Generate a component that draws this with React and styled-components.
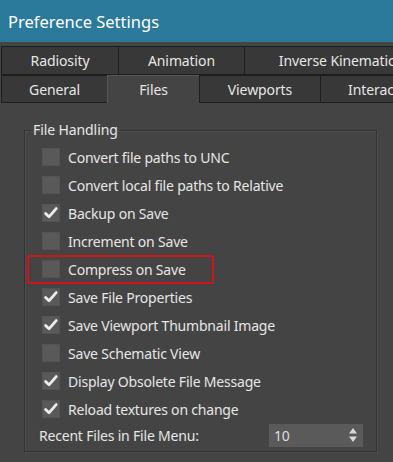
import styled, { createGlobalStyle } from "styled-components";

const GlobalStyle = createGlobalStyle`
  html, body {
    margin: 0;
    padding: 0;
    background: #444444;
    overflow: hidden;
  }
  body {
    font-family: "Noto Sans", "Open Sans", sans-serif;
    color: #e4e4e4;
  }
`;

const tabRows = [
  [
    { label: "Radiosity", width: 118 },
    { label: "Animation", width: 127 },
    { label: "Inverse Kinematics", width: 192 },
  ],
  [
    { label: "General", width: 107 },
    { label: "Files", width: 93, active: true },
    { label: "Viewports", width: 122 },
    { label: "Interaction Mode", width: 168 },
  ],
];

const options = [
  { label: "Convert file paths to UNC", checked: false },
  { label: "Convert local file paths to Relative", checked: false },
  { label: "Backup on Save", checked: true },
  { label: "Increment on Save", checked: false },
  { label: "Compress on Save", checked: false, highlight: true },
  { label: "Save File Properties", checked: true },
  { label: "Save Viewport Thumbnail Image", checked: true },
  { label: "Save Schematic View", checked: false },
  { label: "Display Obsolete File Message", checked: true },
  { label: "Reload textures on change", checked: true },
];

export default function App() {
  return (
    <Window>
      <GlobalStyle />
      <TitleBar>Preference Settings</TitleBar>
      <Tabs>
        {tabRows.map((row, i) => (
          <TabRow key={i}>
            {row.map((tab) => (
              <Tab key={tab.label} $width={tab.width} $active={tab.active}>
                {tab.label}
              </Tab>
            ))}
          </TabRow>
        ))}
      </Tabs>
      <Content>
        <Group>
          <Legend>File Handling</Legend>
          {options.map((opt) => (
            <Row key={opt.label} $highlight={opt.highlight}>
              <Box>
                {opt.checked && (
                  <svg width="18" height="18" viewBox="0 0 18 18">
                    <path
                      d="M3.6 9.4 L7 12.8 L14.2 4.6"
                      fill="none"
                      stroke="#ececec"
                      strokeWidth="2.8"
                      strokeLinecap="round"
                      strokeLinejoin="round"
                    />
                  </svg>
                )}
              </Box>
              <Label>{opt.label}</Label>
            </Row>
          ))}
          <SpinnerRow>
            <span>Recent Files in File Menu:</span>
            <Spinner>
              <span>10</span>
              <svg width="10" height="16" viewBox="0 0 10 16">
                <path d="M5 1 L9 6.5 L1 6.5 Z" fill="#d8d8d8" />
                <path d="M5 15 L9 9.5 L1 9.5 Z" fill="#d8d8d8" />
              </svg>
            </Spinner>
          </SpinnerRow>
        </Group>
        <Group>
          <Legend>Auto Backup</Legend>
        </Group>
      </Content>
    </Window>
  );
}

const Window = styled.div`
  width: 393px;
  height: 462px;
  overflow: hidden;
  background: #444444;
`;

const TitleBar = styled.div`
  height: 42px;
  display: flex;
  align-items: center;
  padding-left: 8px;
  background: #2b7a9b;
  color: #ffffff;
  font-size: 16.5px;
`;

const Tabs = styled.div`
  padding-top: 4px;
  background: #444444;
  white-space: nowrap;
`;

const TabRow = styled.div`
  display: flex;
  height: 29px;
  &:last-child {
    height: 28px;
  }
`;

const Tab = styled.div`
  flex: 0 0 ${(p) => p.$width}px;
  box-sizing: border-box;
  display: flex;
  align-items: center;
  justify-content: center;
  font-size: 14px;
  letter-spacing: -0.1px;
  color: #e6e6e6;
  background: ${(p) => (p.$active ? "#444444" : "#383838")};
  border: 1px solid #1e1e1e;
  border-bottom: ${(p) => (p.$active ? "none" : "1px solid #1e1e1e")};
  border-left-color: ${(p) => (p.$active ? "#555" : "#1e1e1e")};
  border-top-color: ${(p) => (p.$active ? "#555" : "#1e1e1e")};
  margin-left: -1px;
  &:first-child {
    margin-left: 1px;
  }
`;

const Content = styled.div`
  padding: 16px 16px 0 24px;
`;

const Group = styled.fieldset`
  margin: 0 0 12px;
  padding: 2px 0 4px 17px;
  border: 1px solid #333333;
  box-shadow: 1px 1px 0 #4e4e4e, inset 1px 1px 0 #4e4e4e;
`;

const Legend = styled.legend`
  margin-left: -11px;
  padding: 0 2px;
  font-size: 14px;
  letter-spacing: -0.1px;
  line-height: 22px;
  color: #e6e6e6;
`;

const Row = styled.div`
  position: relative;
  display: flex;
  align-items: center;
  gap: 8px;
  height: 28px;
  &::after {
    content: "";
    display: ${(p) => (p.$highlight ? "block" : "none")};
    position: absolute;
    left: -15px;
    top: 0;
    width: 183px;
    height: 25px;
    border: 2px solid #d3131c;
    border-radius: 2px;
  }
`;

const Box = styled.div`
  width: 18px;
  height: 18px;
  flex: 0 0 18px;
  background: #595959;
  box-shadow: inset 0 0 0 1px #535353;
`;

const Label = styled.span`
  font-size: 14px;
  letter-spacing: -0.2px;
  color: #e6e6e6;
  white-space: nowrap;
`;

const SpinnerRow = styled.div`
  display: flex;
  align-items: center;
  justify-content: space-between;
  height: 24px;
  margin-left: -3px;
  padding-right: 13px;
  font-size: 14px;
  letter-spacing: -0.2px;
  color: #e6e6e6;
`;

const Spinner = styled.div`
  width: 94px;
  height: 23px;
  box-sizing: border-box;
  display: flex;
  align-items: center;
  justify-content: space-between;
  padding: 0 5px 0 5px;
  background: #5a5a5a;
  color: #dcdcdc;
  font-size: 14px;
`;
